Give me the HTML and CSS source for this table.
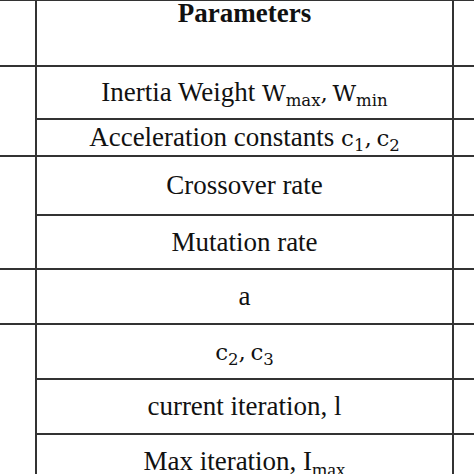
FILE: index.html
```html
<!DOCTYPE html>
<html>
<head>
<meta charset="utf-8">
<link rel="stylesheet" href="styles.css">
</head>
<body>
<div class="frame">
<table class="params">
  <colgroup>
    <col class="c-left">
    <col class="c-mid">
    <col class="c-right">
  </colgroup>
  <tr class="r-head">
    <td></td>
    <th class="head">Parameters</th>
    <td></td>
  </tr>
  <tr class="r1">
    <td rowspan="2"></td>
    <td>Inertia Weight <span class="m">W<sub>max</sub>,&thinsp;W<sub>min</sub></span></td>
    <td></td>
  </tr>
  <tr class="r2">
    <td>Acceleration constants <span class="m">c<sub>1</sub>,&thinsp;c<sub>2</sub></span></td>
    <td></td>
  </tr>
  <tr class="r3">
    <td rowspan="2"></td>
    <td>Crossover rate</td>
    <td></td>
  </tr>
  <tr class="r4">
    <td>Mutation rate</td>
    <td></td>
  </tr>
  <tr class="r5">
    <td></td>
    <td>a</td>
    <td></td>
  </tr>
  <tr class="r6">
    <td rowspan="3"></td>
    <td><span class="m">c<sub>2</sub>,&thinsp;c<sub>3</sub></span></td>
    <td></td>
  </tr>
  <tr class="r7">
    <td>current iteration, l</td>
    <td></td>
  </tr>
  <tr class="r8">
    <td>Max iteration, I<sub>max</sub></td>
    <td></td>
  </tr>
</table>
</div>
</body>
</html>
```
FILE: styles.css
```css
html, body {
  margin: 0;
  padding: 0;
  background: #fff;
}
.frame {
  width: 474px;
  height: 474px;
  overflow: hidden;
}
.params {
  border-collapse: collapse;
  table-layout: fixed;
  width: 532px;
  margin-left: -40px;
  margin-top: -1px;
  font-family: "Liberation Serif", "Times New Roman", serif;
  font-size: 27px;
  color: #111;
}
.c-left { width: 75px; }
.c-mid { width: 417px; }
.c-right { width: 40px; }
.params td, .params th {
  border: 2px solid #333;
  padding: 0;
  text-align: center;
  vertical-align: middle;
  line-height: 1;
}
.params th.head {
  font-weight: bold;
  vertical-align: top;
  padding-top: 1px;
  line-height: 0.85;
}
.r-head { height: 66px; }
.r1 { height: 53px; }
.r2 { height: 37px; }
.r3 { height: 59px; }
.r4 { height: 54px; }
.r5 { height: 55px; }
.r6 { height: 55px; }
.r7 { height: 55px; }
.r8 { height: 55px; }
.m {
  font-family: "DejaVu Serif", serif;
  font-size: 23px;
}
sub {
  font-size: 0.72em;
  vertical-align: -0.3em;
  line-height: 0;
}
```
